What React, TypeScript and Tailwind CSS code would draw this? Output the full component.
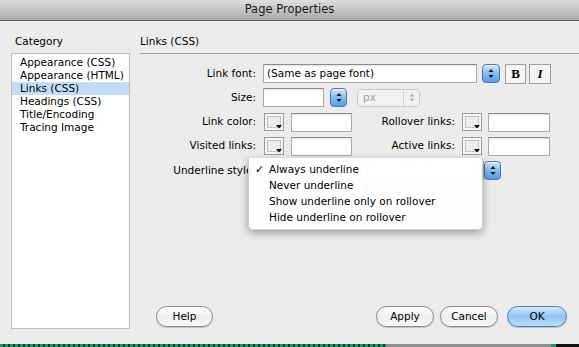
import React from 'react';

const categories = [
  'Appearance (CSS)',
  'Appearance (HTML)',
  'Links (CSS)',
  'Headings (CSS)',
  'Title/Encoding',
  'Tracing Image',
];

const menuItems = [
  { label: 'Always underline', checked: true },
  { label: 'Never underline' },
  { label: 'Show underline only on rollover' },
  { label: 'Hide underline on rollover' },
];

const Stepper = ({ w = 'w-[18px]' }: { w?: string }) => (
  <div
    className={`${w} h-[19px] rounded-[4px] border border-[#4d74ad] bg-linear-to-b from-[#d3e8fc] via-[#86bbf1] to-[#5b9ce6] flex items-center justify-center shadow-[inset_0_1px_0_rgba(255,255,255,0.7)]`}
  >
    <svg width="6" height="11" viewBox="0 0 6 11">
      <path d="M3 1 L5.5 4 L0.5 4 Z" fill="#111" />
      <path d="M3 10 L5.5 7 L0.5 7 Z" fill="#111" />
    </svg>
  </div>
);

const Field = ({ w, children }: { w: string; children?: React.ReactNode }) => (
  <div
    className={`${w} h-[19px] bg-white border border-[#a9a9a9] border-t-[#8c8c8c] shadow-[inset_0_1px_1px_rgba(0,0,0,0.12)] flex items-center pl-[3px]`}
  >
    {children}
  </div>
);

const Swatch = () => (
  <div className="relative w-[20px] h-[18px] border border-[#9b9b9b] bg-[#f7f7f7] p-[2px]">
    <div className="h-full border border-[#c4c4c4] bg-[#ededed]" />
    <svg className="absolute right-[1px] bottom-[1px]" width="6" height="4" viewBox="0 0 6 4">
      <path d="M0 0 L6 0 L3 3.5 Z" fill="#111" />
    </svg>
  </div>
);

const Label = ({ w, children }: { w: string; children: React.ReactNode }) => (
  <div className={`${w} text-right whitespace-nowrap`}>{children}</div>
);

const AquaButton = ({ w, children, primary }: { w: string; children: React.ReactNode; primary?: boolean }) => (
  <div
    className={
      primary
        ? `${w} h-[21px] rounded-full border border-[#4c7cc0] bg-linear-to-b from-[#d6ebfd] via-[#8ec3f3] to-[#bfe0fc] flex items-center justify-center shadow-[0_1px_1px_rgba(0,0,0,0.2)]`
        : `${w} h-[21px] rounded-full border border-[#8a8a8a] bg-linear-to-b from-white via-[#efefef] to-[#f8f8f8] flex items-center justify-center shadow-[0_1px_1px_rgba(0,0,0,0.2)]`
    }
  >
    {children}
  </div>
);

export default function App() {
  return (
    <div
      className="w-[579px] h-[347px] flex flex-col bg-[#ececec] overflow-hidden text-[10.5px] text-black"
      style={{ fontFamily: '"DejaVu Sans", "Liberation Sans", sans-serif' }}
    >
      {/* title bar */}
      <div className="h-[21px] shrink-0 border-b border-[#5a5a5a] bg-linear-to-b from-[#dedede] to-[#a9a9a9] flex items-center justify-center text-[11.5px] text-[#1a1a1a]">
        Page Properties
      </div>

      <div className="flex-1 flex min-h-0">
        {/* category column */}
        <div className="w-[130px] pl-[11px] flex flex-col">
          <div className="h-[32px] pt-[14px] pl-[4px] leading-[13px]">Category</div>
          <div className="flex-1 mb-[15px] bg-white border border-[#bdbdbd] pt-[2px]">
            {categories.map((c) => (
              <div
                key={c}
                className={`h-[13px] leading-[13px] pl-[8px] ${c === 'Links (CSS)' ? 'bg-[#c4ddf7]' : ''}`}
              >
                {c}
              </div>
            ))}
          </div>
        </div>

        {/* content column */}
        <div className="flex-1 ml-[10px] flex flex-col">
          <div className="h-[33px] pt-[14px] leading-[13px] border-b border-[#a3a3a3]">Links (CSS)</div>

          <div className="mt-[10px] flex flex-col gap-[5.25px]">
            {/* link font */}
            <div className="h-[19px] flex items-center">
              <Label w="w-[116px]">Link font:</Label>
              <div className="ml-[7px]">
                <Field w="w-[214px]">(Same as page font)</Field>
              </div>
              <div className="ml-[5px]">
                <Stepper />
              </div>
              <div className="ml-[5px] w-[21px] h-[20px] border border-[#a0a0a0] bg-[#f6f6f6] flex items-center justify-center font-bold text-[13px]" style={{ fontFamily: '"Liberation Serif", serif' }}>
                B
              </div>
              <div className="ml-[3px] w-[22px] h-[20px] border border-[#a0a0a0] bg-[#f6f6f6] flex items-center justify-center font-bold italic text-[13px]" style={{ fontFamily: '"Liberation Serif", serif' }}>
                I
              </div>
            </div>

            {/* size */}
            <div className="h-[19px] flex items-center">
              <Label w="w-[116px]">Size:</Label>
              <div className="ml-[7px]">
                <Field w="w-[61px]" />
              </div>
              <div className="ml-[6px]">
                <Stepper w="w-[17px]" />
              </div>
              <div className="ml-[10px] w-[63px] h-[18px] rounded-[4px] border border-[#cacaca] bg-[#f2f2f2] flex items-center">
                <span className="flex-1 pl-[5px] text-[#a3a3a3]">px</span>
                <div className="w-[16px] h-full border-l border-[#d2d2d2] flex items-center justify-center">
                  <svg width="6" height="11" viewBox="0 0 6 11">
                    <path d="M3 1.5 L5.5 4.5 L0.5 4.5 Z" fill="#b0b0b0" />
                    <path d="M3 9.5 L5.5 6.5 L0.5 6.5 Z" fill="#b0b0b0" />
                  </svg>
                </div>
              </div>
            </div>

            {/* link color / rollover */}
            <div className="h-[19px] flex items-center">
              <Label w="w-[116px]">Link color:</Label>
              <div className="ml-[8px]">
                <Swatch />
              </div>
              <div className="ml-[7px]">
                <Field w="w-[61px]" />
              </div>
              <Label w="w-[103px]">Rollover links:</Label>
              <div className="ml-[7px]">
                <Swatch />
              </div>
              <div className="ml-[6px]">
                <Field w="w-[62px]" />
              </div>
            </div>

            {/* visited / active */}
            <div className="h-[19px] flex items-center">
              <Label w="w-[116px]">Visited links:</Label>
              <div className="ml-[8px]">
                <Swatch />
              </div>
              <div className="ml-[7px]">
                <Field w="w-[61px]" />
              </div>
              <Label w="w-[103px]">Active links:</Label>
              <div className="ml-[7px]">
                <Swatch />
              </div>
              <div className="ml-[6px]">
                <Field w="w-[62px]" />
              </div>
            </div>

            {/* underline style */}
            <div className="relative h-[19px] flex items-center">
              <Label w="w-[116px]">Underline style:</Label>
              <div className="ml-[7px] w-[221px] h-[19px] bg-white border border-[#a9a9a9] rounded-l-[4px]" />
              <Stepper w="w-[17px]" />

              <div className="absolute left-[108px] top-[-3px] w-[235px] h-[72px] pt-[4px] bg-white/95 rounded-b-[5px] shadow-[0_3px_8px_rgba(0,0,0,0.35)] border border-[#d0d0d0] border-t-0">
                {menuItems.map((m) => (
                  <div key={m.label} className="h-[16px] flex items-center">
                    <span className="w-[20px] pl-[6px] text-[11px]">{m.checked ? '✓' : ''}</span>
                    <span>{m.label}</span>
                  </div>
                ))}
              </div>
            </div>
          </div>

          {/* buttons */}
          <div className="mt-auto mb-[17px] flex items-center pr-[12px]">
            <div className="ml-[16px]">
              <AquaButton w="w-[57px]">Help</AquaButton>
            </div>
            <div className="ml-auto">
              <AquaButton w="w-[58px]">Apply</AquaButton>
            </div>
            <div className="ml-[6px]">
              <AquaButton w="w-[58px]">Cancel</AquaButton>
            </div>
            <div className="ml-[9px]">
              <AquaButton w="w-[60px]" primary>
                OK
              </AquaButton>
            </div>
          </div>
        </div>
      </div>

      {/* desktop behind the dialog */}
      <div className="h-[3px] shrink-0 flex">
        <div className="w-[386px] bg-[repeating-linear-gradient(90deg,#1a9a68_0px,#1a9a68_3px,#0c3b28_3px,#0c3b28_5px)]" />
        <div className="w-[165px] bg-[#8f8f8f]" />
        <div className="w-[5px] bg-[#1a9a68]" />
        <div className="flex-1 bg-[#111]" />
      </div>
    </div>
  );
}
